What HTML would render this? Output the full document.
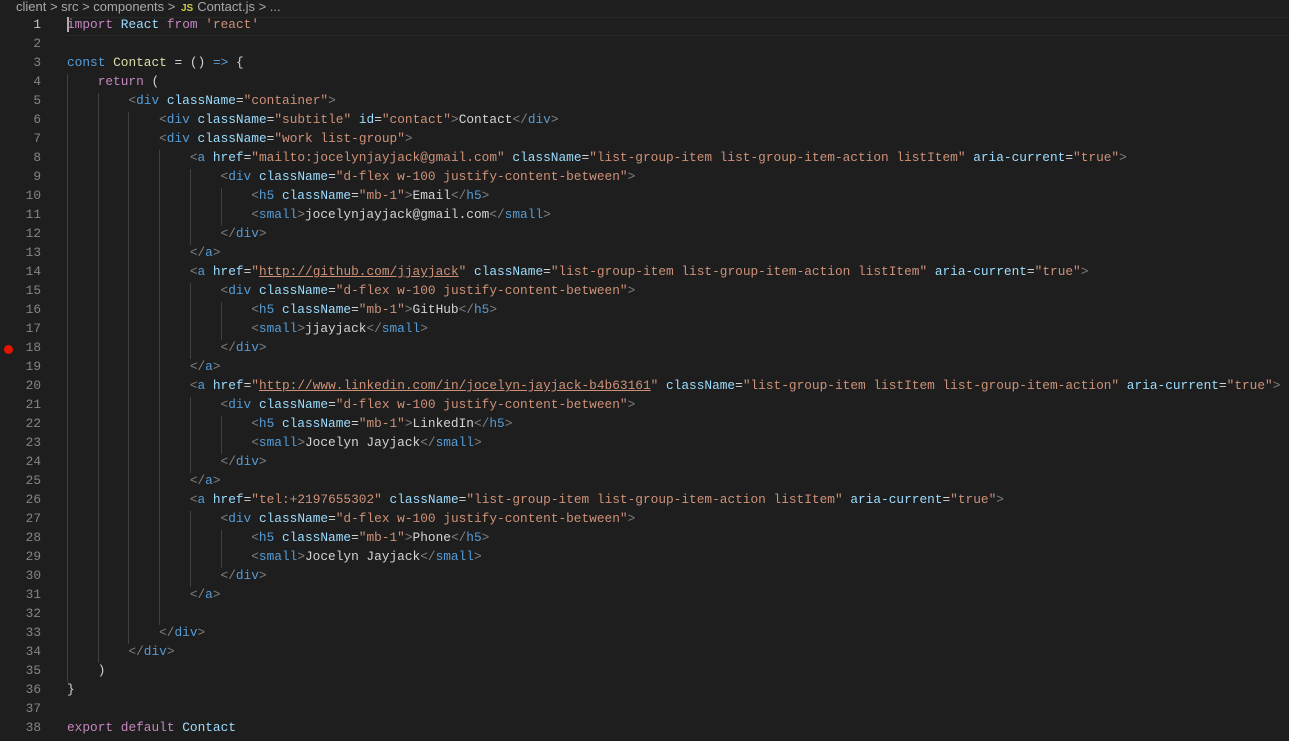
<!DOCTYPE html>
<html><head><meta charset="utf-8"><style>
html,body{margin:0;padding:0;background:#1e1e1e;width:1289px;height:741px;overflow:hidden}
.bc{position:absolute;left:16px;top:0;height:16px;font:13px "Liberation Sans",sans-serif;color:#a9a9a9;line-height:14px;white-space:nowrap}
.bc .js{color:#cbcb41;font-weight:bold;font-size:10px;margin:0 4px 0 2px}
.ed{position:absolute;left:0;top:17px;width:1289px}
.l{position:relative;height:19px;line-height:19px;font:12.8px "Liberation Mono",monospace;white-space:pre;color:#d4d4d4}
.n{position:absolute;left:0;width:41px;text-align:right;color:#858585}
.c{position:absolute;left:67px;top:0}
.g{display:inline-block;width:4ch;height:19px;vertical-align:top;box-shadow:inset 1px 0 0 #404040}
.cur{position:absolute;left:66px;top:0;width:1223px;height:17px;border:1px solid #282828;border-left:none}
.k{color:#569cd6}.p{color:#c586c0}.v{color:#9cdcfe}.s{color:#ce9178}.t{color:#808080}.f{color:#dcdcaa}.u{text-decoration:underline}
.bp{position:absolute;left:4px;top:5px;width:9px;height:9px;border-radius:50%;background:#e51400}
</style></head><body>
<div class="bc">client &gt; src &gt; components &gt; <span class="js">JS</span>Contact.js &gt; ...</div>
<div class="ed">
<div class="l"><div class="cur"></div><span class="n" style="color:#c6c6c6">1</span><span class="c" style="box-shadow:inset 2px 0 0 #aeafad"><span class="p">import</span> <span class="v">React</span> <span class="p">from</span> <span class="s">'react'</span></span></div>
<div class="l"><span class="n">2</span></div>
<div class="l"><span class="n">3</span><span class="c"><span class="k">const</span> <span class="f">Contact</span> = () <span class="k">=&gt;</span> {</span></div>
<div class="l"><span class="n">4</span><span class="c"><span class="g"></span><span class="p">return</span> (</span></div>
<div class="l"><span class="n">5</span><span class="c"><span class="g"></span><span class="g"></span><span class="t">&lt;</span><span class="k">div</span> <span class="v">className</span>=<span class="s">"container"</span><span class="t">&gt;</span></span></div>
<div class="l"><span class="n">6</span><span class="c"><span class="g"></span><span class="g"></span><span class="g"></span><span class="t">&lt;</span><span class="k">div</span> <span class="v">className</span>=<span class="s">"subtitle"</span> <span class="v">id</span>=<span class="s">"contact"</span><span class="t">&gt;</span>Contact<span class="t">&lt;/</span><span class="k">div</span><span class="t">&gt;</span></span></div>
<div class="l"><span class="n">7</span><span class="c"><span class="g"></span><span class="g"></span><span class="g"></span><span class="t">&lt;</span><span class="k">div</span> <span class="v">className</span>=<span class="s">"work list-group"</span><span class="t">&gt;</span></span></div>
<div class="l"><span class="n">8</span><span class="c"><span class="g"></span><span class="g"></span><span class="g"></span><span class="g"></span><span class="t">&lt;</span><span class="k">a</span> <span class="v">href</span>=<span class="s">"mailto:jocelynjayjack@gmail.com"</span> <span class="v">className</span>=<span class="s">"list-group-item list-group-item-action listItem"</span> <span class="v">aria-current</span>=<span class="s">"true"</span><span class="t">&gt;</span></span></div>
<div class="l"><span class="n">9</span><span class="c"><span class="g"></span><span class="g"></span><span class="g"></span><span class="g"></span><span class="g"></span><span class="t">&lt;</span><span class="k">div</span> <span class="v">className</span>=<span class="s">"d-flex w-100 justify-content-between"</span><span class="t">&gt;</span></span></div>
<div class="l"><span class="n">10</span><span class="c"><span class="g"></span><span class="g"></span><span class="g"></span><span class="g"></span><span class="g"></span><span class="g"></span><span class="t">&lt;</span><span class="k">h5</span> <span class="v">className</span>=<span class="s">"mb-1"</span><span class="t">&gt;</span>Email<span class="t">&lt;/</span><span class="k">h5</span><span class="t">&gt;</span></span></div>
<div class="l"><span class="n">11</span><span class="c"><span class="g"></span><span class="g"></span><span class="g"></span><span class="g"></span><span class="g"></span><span class="g"></span><span class="t">&lt;</span><span class="k">small</span><span class="t">&gt;</span>jocelynjayjack@gmail.com<span class="t">&lt;/</span><span class="k">small</span><span class="t">&gt;</span></span></div>
<div class="l"><span class="n">12</span><span class="c"><span class="g"></span><span class="g"></span><span class="g"></span><span class="g"></span><span class="g"></span><span class="t">&lt;/</span><span class="k">div</span><span class="t">&gt;</span></span></div>
<div class="l"><span class="n">13</span><span class="c"><span class="g"></span><span class="g"></span><span class="g"></span><span class="g"></span><span class="t">&lt;/</span><span class="k">a</span><span class="t">&gt;</span></span></div>
<div class="l"><span class="n">14</span><span class="c"><span class="g"></span><span class="g"></span><span class="g"></span><span class="g"></span><span class="t">&lt;</span><span class="k">a</span> <span class="v">href</span>=<span class="s">"<span class="u">http://github.com/jjayjack</span>"</span> <span class="v">className</span>=<span class="s">"list-group-item list-group-item-action listItem"</span> <span class="v">aria-current</span>=<span class="s">"true"</span><span class="t">&gt;</span></span></div>
<div class="l"><span class="n">15</span><span class="c"><span class="g"></span><span class="g"></span><span class="g"></span><span class="g"></span><span class="g"></span><span class="t">&lt;</span><span class="k">div</span> <span class="v">className</span>=<span class="s">"d-flex w-100 justify-content-between"</span><span class="t">&gt;</span></span></div>
<div class="l"><span class="n">16</span><span class="c"><span class="g"></span><span class="g"></span><span class="g"></span><span class="g"></span><span class="g"></span><span class="g"></span><span class="t">&lt;</span><span class="k">h5</span> <span class="v">className</span>=<span class="s">"mb-1"</span><span class="t">&gt;</span>GitHub<span class="t">&lt;/</span><span class="k">h5</span><span class="t">&gt;</span></span></div>
<div class="l"><span class="n">17</span><span class="c"><span class="g"></span><span class="g"></span><span class="g"></span><span class="g"></span><span class="g"></span><span class="g"></span><span class="t">&lt;</span><span class="k">small</span><span class="t">&gt;</span>jjayjack<span class="t">&lt;/</span><span class="k">small</span><span class="t">&gt;</span></span></div>
<div class="l"><span class="bp"></span><span class="n">18</span><span class="c"><span class="g"></span><span class="g"></span><span class="g"></span><span class="g"></span><span class="g"></span><span class="t">&lt;/</span><span class="k">div</span><span class="t">&gt;</span></span></div>
<div class="l"><span class="n">19</span><span class="c"><span class="g"></span><span class="g"></span><span class="g"></span><span class="g"></span><span class="t">&lt;/</span><span class="k">a</span><span class="t">&gt;</span></span></div>
<div class="l"><span class="n">20</span><span class="c"><span class="g"></span><span class="g"></span><span class="g"></span><span class="g"></span><span class="t">&lt;</span><span class="k">a</span> <span class="v">href</span>=<span class="s">"<span class="u">http://www.linkedin.com/in/jocelyn-jayjack-b4b63161</span>"</span> <span class="v">className</span>=<span class="s">"list-group-item listItem list-group-item-action"</span> <span class="v">aria-current</span>=<span class="s">"true"</span><span class="t">&gt;</span></span></div>
<div class="l"><span class="n">21</span><span class="c"><span class="g"></span><span class="g"></span><span class="g"></span><span class="g"></span><span class="g"></span><span class="t">&lt;</span><span class="k">div</span> <span class="v">className</span>=<span class="s">"d-flex w-100 justify-content-between"</span><span class="t">&gt;</span></span></div>
<div class="l"><span class="n">22</span><span class="c"><span class="g"></span><span class="g"></span><span class="g"></span><span class="g"></span><span class="g"></span><span class="g"></span><span class="t">&lt;</span><span class="k">h5</span> <span class="v">className</span>=<span class="s">"mb-1"</span><span class="t">&gt;</span>LinkedIn<span class="t">&lt;/</span><span class="k">h5</span><span class="t">&gt;</span></span></div>
<div class="l"><span class="n">23</span><span class="c"><span class="g"></span><span class="g"></span><span class="g"></span><span class="g"></span><span class="g"></span><span class="g"></span><span class="t">&lt;</span><span class="k">small</span><span class="t">&gt;</span>Jocelyn Jayjack<span class="t">&lt;/</span><span class="k">small</span><span class="t">&gt;</span></span></div>
<div class="l"><span class="n">24</span><span class="c"><span class="g"></span><span class="g"></span><span class="g"></span><span class="g"></span><span class="g"></span><span class="t">&lt;/</span><span class="k">div</span><span class="t">&gt;</span></span></div>
<div class="l"><span class="n">25</span><span class="c"><span class="g"></span><span class="g"></span><span class="g"></span><span class="g"></span><span class="t">&lt;/</span><span class="k">a</span><span class="t">&gt;</span></span></div>
<div class="l"><span class="n">26</span><span class="c"><span class="g"></span><span class="g"></span><span class="g"></span><span class="g"></span><span class="t">&lt;</span><span class="k">a</span> <span class="v">href</span>=<span class="s">"tel:+2197655302"</span> <span class="v">className</span>=<span class="s">"list-group-item list-group-item-action listItem"</span> <span class="v">aria-current</span>=<span class="s">"true"</span><span class="t">&gt;</span></span></div>
<div class="l"><span class="n">27</span><span class="c"><span class="g"></span><span class="g"></span><span class="g"></span><span class="g"></span><span class="g"></span><span class="t">&lt;</span><span class="k">div</span> <span class="v">className</span>=<span class="s">"d-flex w-100 justify-content-between"</span><span class="t">&gt;</span></span></div>
<div class="l"><span class="n">28</span><span class="c"><span class="g"></span><span class="g"></span><span class="g"></span><span class="g"></span><span class="g"></span><span class="g"></span><span class="t">&lt;</span><span class="k">h5</span> <span class="v">className</span>=<span class="s">"mb-1"</span><span class="t">&gt;</span>Phone<span class="t">&lt;/</span><span class="k">h5</span><span class="t">&gt;</span></span></div>
<div class="l"><span class="n">29</span><span class="c"><span class="g"></span><span class="g"></span><span class="g"></span><span class="g"></span><span class="g"></span><span class="g"></span><span class="t">&lt;</span><span class="k">small</span><span class="t">&gt;</span>Jocelyn Jayjack<span class="t">&lt;/</span><span class="k">small</span><span class="t">&gt;</span></span></div>
<div class="l"><span class="n">30</span><span class="c"><span class="g"></span><span class="g"></span><span class="g"></span><span class="g"></span><span class="g"></span><span class="t">&lt;/</span><span class="k">div</span><span class="t">&gt;</span></span></div>
<div class="l"><span class="n">31</span><span class="c"><span class="g"></span><span class="g"></span><span class="g"></span><span class="g"></span><span class="t">&lt;/</span><span class="k">a</span><span class="t">&gt;</span></span></div>
<div class="l"><span class="n">32</span><span class="c"><span class="g"></span><span class="g"></span><span class="g"></span><span class="g"></span></span></div>
<div class="l"><span class="n">33</span><span class="c"><span class="g"></span><span class="g"></span><span class="g"></span><span class="t">&lt;/</span><span class="k">div</span><span class="t">&gt;</span></span></div>
<div class="l"><span class="n">34</span><span class="c"><span class="g"></span><span class="g"></span><span class="t">&lt;/</span><span class="k">div</span><span class="t">&gt;</span></span></div>
<div class="l"><span class="n">35</span><span class="c"><span class="g"></span>)</span></div>
<div class="l"><span class="n">36</span><span class="c">}</span></div>
<div class="l"><span class="n">37</span></div>
<div class="l"><span class="n">38</span><span class="c"><span class="p">export</span> <span class="p">default</span> <span class="v">Contact</span></span></div>
</div>
</body></html>
